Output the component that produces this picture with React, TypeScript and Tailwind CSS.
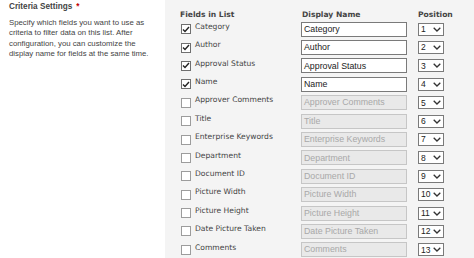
import React from "react";

const fields: { name: string; checked: boolean }[] = [
  { name: "Category", checked: true },
  { name: "Author", checked: true },
  { name: "Approval Status", checked: true },
  { name: "Name", checked: true },
  { name: "Approver Comments", checked: false },
  { name: "Title", checked: false },
  { name: "Enterprise Keywords", checked: false },
  { name: "Department", checked: false },
  { name: "Document ID", checked: false },
  { name: "Picture Width", checked: false },
  { name: "Picture Height", checked: false },
  { name: "Date Picture Taken", checked: false },
  { name: "Comments", checked: false },
];

function Check({ checked }: { checked: boolean }) {
  return (
    <span
      className={
        "flex h-[10px] w-[10px] shrink-0 items-center justify-center border bg-white " +
        (checked ? "border-[#6f6f6f]" : "border-[#9c9c9c]")
      }
    >
      {checked && (
        <svg width="8" height="7" viewBox="0 0 8 7">
          <polyline points="1,3.5 3,5.5 7,1" fill="none" stroke="#222" strokeWidth="1.4" />
        </svg>
      )}
    </span>
  );
}

function Select({ n }: { n: number }) {
  return (
    <div className="flex h-[13px] w-[26px] items-center justify-between border border-[#7a7a7a] bg-white pl-[2px] pr-[2px] text-[8.5px] leading-none text-[#222] [font-family:'Liberation_Sans',Arial,sans-serif]">
      <span>{n}</span>
      <svg width="8" height="5" viewBox="0 0 8 5">
        <polyline points="0.7,0.7 4,4 7.3,0.7" fill="none" stroke="#333" strokeWidth="1.3" />
      </svg>
    </div>
  );
}

export default function App() {
  return (
    <div className="flex h-[258px] w-[474px] overflow-hidden bg-white">
      <div className="w-[165px] shrink-0 pl-[9px] pt-[2px] [font-family:'Liberation_Sans',Arial,sans-serif]">
        <div className="flex items-start text-[8.2px] font-bold leading-[10px] text-[#444]">
          <span>Criteria Settings</span>
          <span className="ml-[4px] text-[#c00000]">*</span>
        </div>
        <p className="mt-[6px] text-[7.8px] leading-[10.3px] text-[#444]">
          Specify which fields you want to use as
          <br />
          criteria to filter data on this list. After
          <br />
          configuration, you can customize the
          <br />
          display name for fields at the same time.
        </p>
      </div>
      <div className="flex-1 bg-[#f4f4f4] pl-[16px]">
        <div className="grid h-[20px] grid-cols-[120px_117px_1fr] pt-[10px] text-[7.6px] font-bold leading-[10px] text-[#444] [font-family:'DejaVu_Sans',Verdana,sans-serif]">
          <span className="-ml-[1px]">Fields in List</span>
          <span className="ml-[1px]">Display Name</span>
          <span>Position</span>
        </div>
        {fields.map((f, i) => (
          <div key={f.name} className="grid h-[18.4px] grid-cols-[120px_117px_1fr] items-center">
            <div className="flex items-center">
              <Check checked={f.checked} />
              <span className="mb-[5px] ml-[4px] text-[7.6px] leading-none text-[#444] [font-family:'DejaVu_Sans',Verdana,sans-serif]">
                {f.name}
              </span>
            </div>
            <div
              className={
                "flex h-[15px] w-[106px] items-center border px-[2px] text-[8.8px] leading-none [font-family:'Liberation_Sans',Arial,sans-serif] " +
                (f.checked
                  ? "border-[#7a7a7a] bg-white text-[#222]"
                  : "border-[#c6c6c6] bg-[#e9e9e9] text-[#a8a8a8]")
              }
            >
              {f.name}
            </div>
            <div className="flex items-center">
              <Select n={i + 1} />
            </div>
          </div>
        ))}
      </div>
    </div>
  );
}
